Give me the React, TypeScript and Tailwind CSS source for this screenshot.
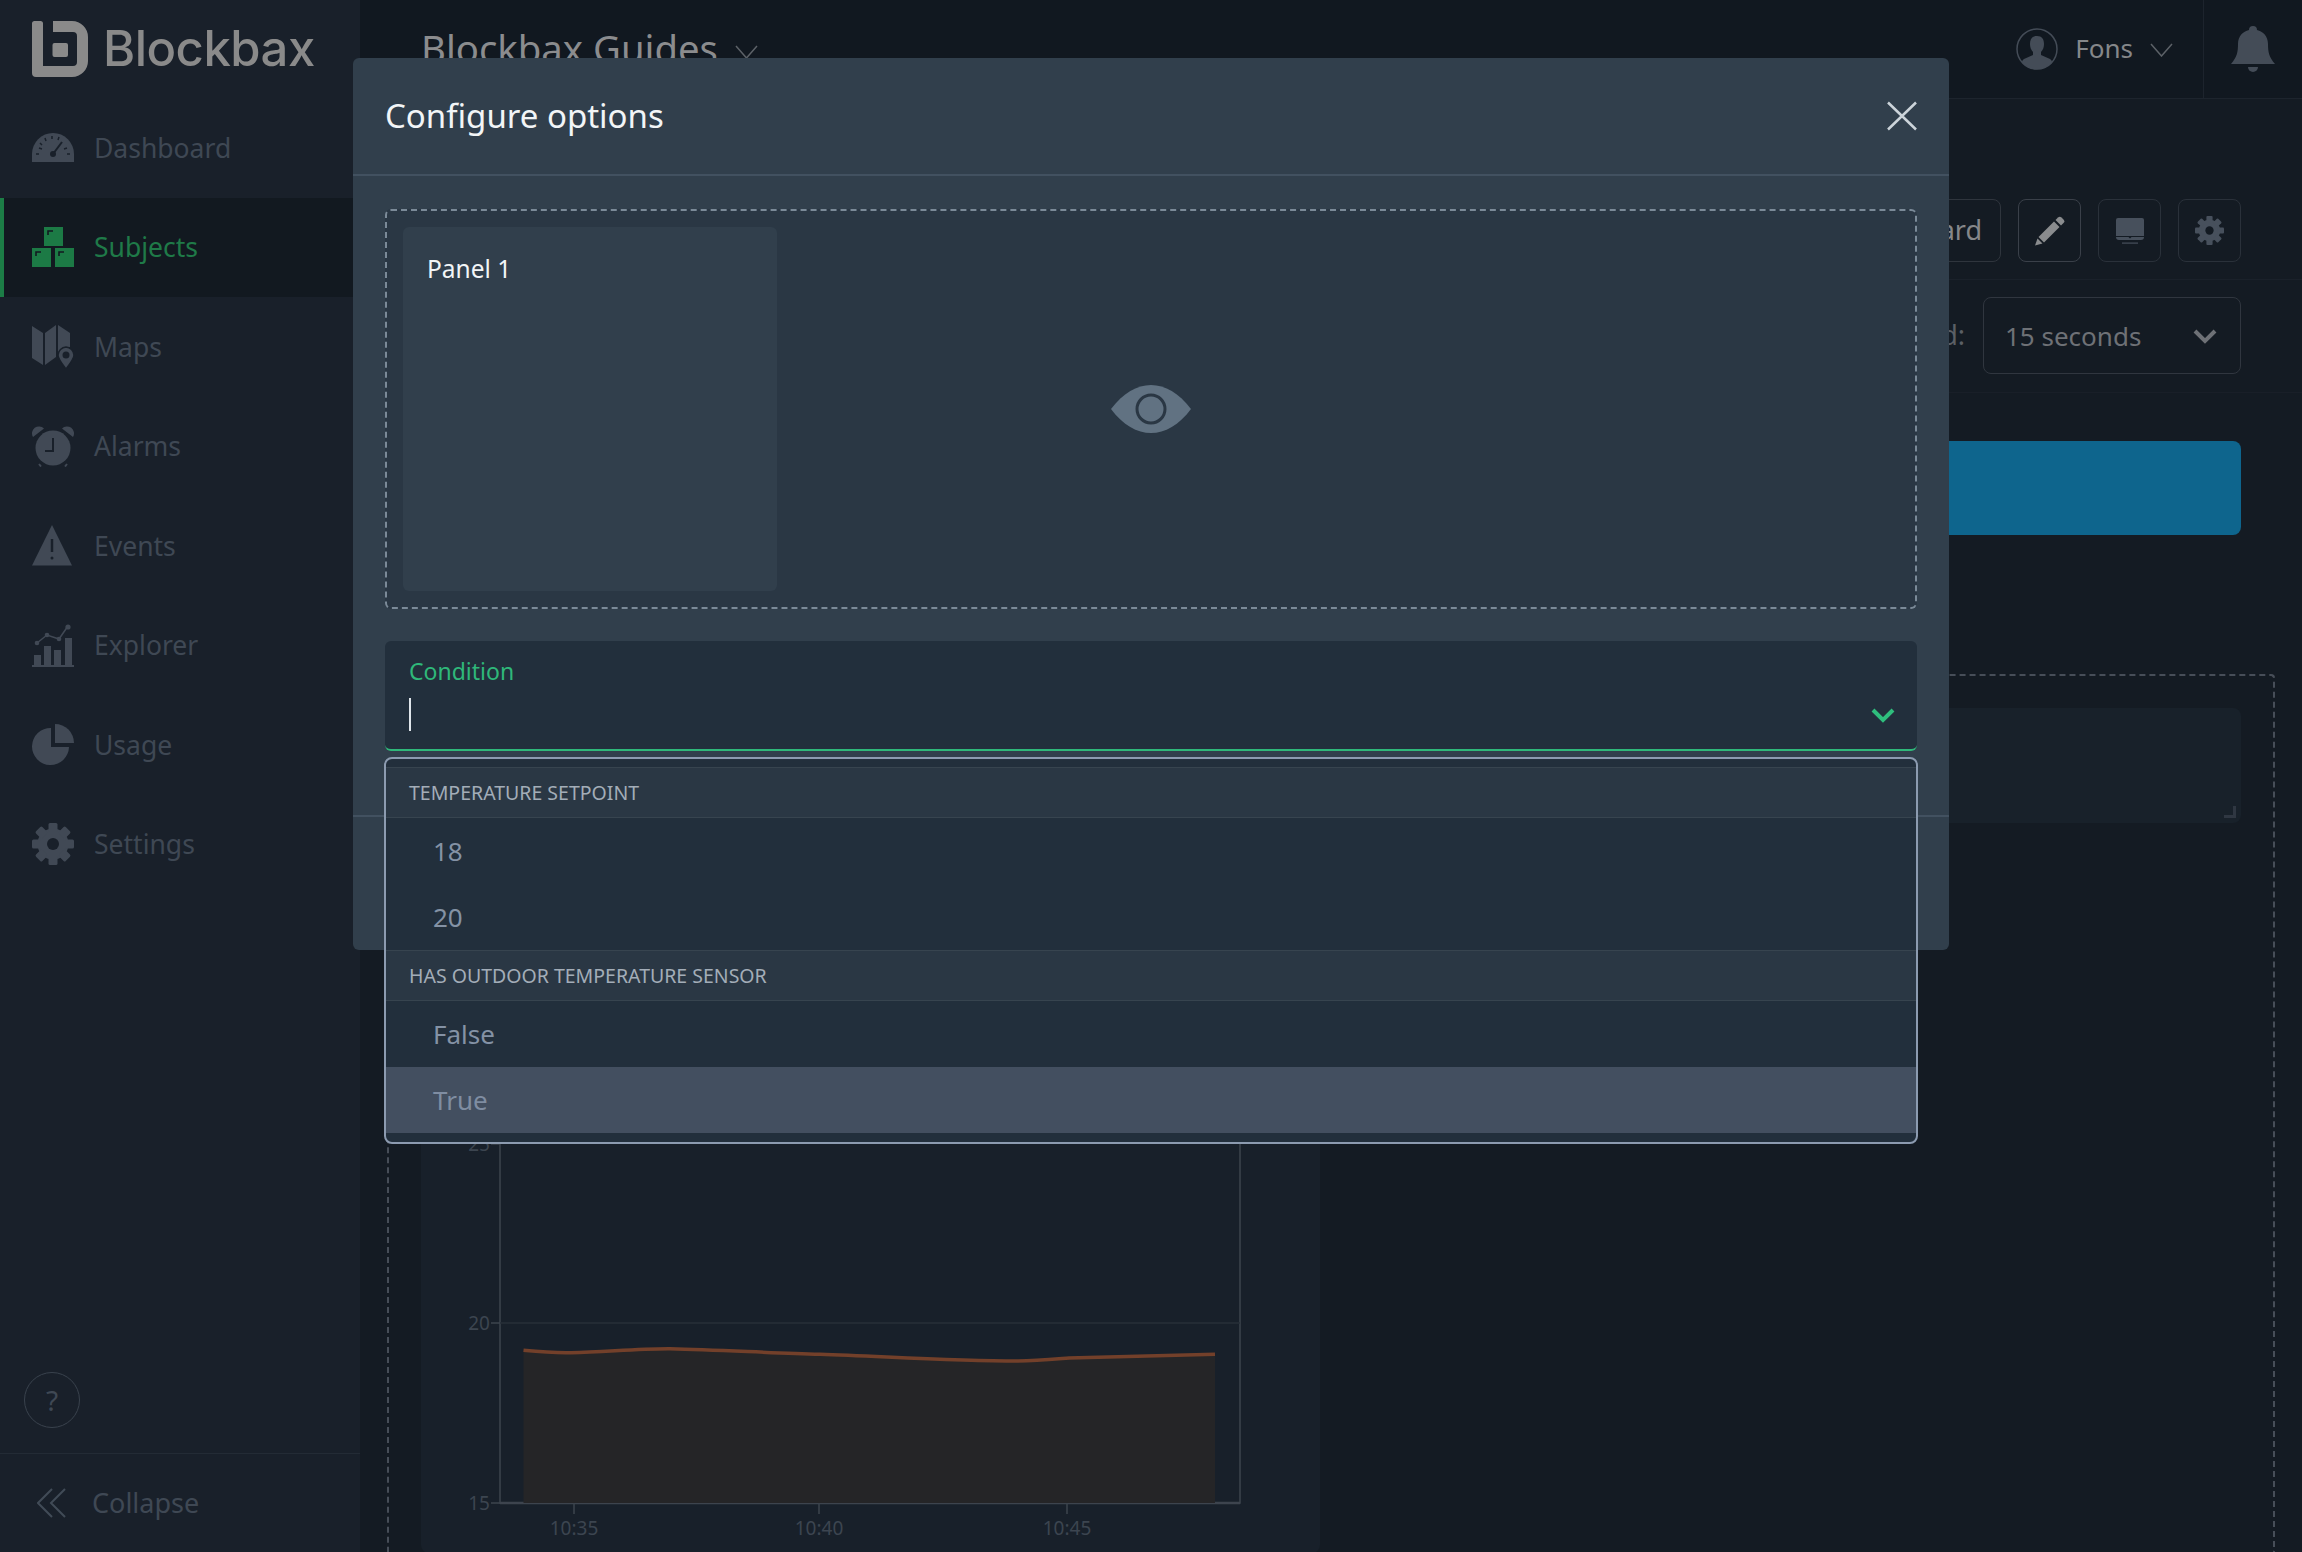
import React from "react";

const font = { fontFamily: '"Noto Sans", "Open Sans", sans-serif' };

function LogoIcon() {
  return (
    <svg width="56" height="56" viewBox="0 0 56 56" className="fill-[#8a8a8a]">
      <path d="M0 2.5a2.5 2.5 0 0 1 2.5-2.5h6a2.5 2.5 0 0 1 2.5 2.5V45h30a4 4 0 0 0 4-4V15a4 4 0 0 0-4-4H21V0h19a16 16 0 0 1 16 16v24a16 16 0 0 1-16 16H4a4 4 0 0 1-4-4Z" />
      <rect x="20.500" y="22" width="15.500" height="14" rx="2" />
    </svg>
  );
}

function DashboardIcon() {
  return (
    <svg width="42" height="30" viewBox="0 0 42 30" className="fill-[#414955] stroke-[#19202a]">
      <path stroke="none" d="M0 29V21a21 21 0 0 1 42 0v8Z" />
      <path strokeWidth="1.5" d="M4 21h3M35 21h3M8 10l2 2M13 5l1 3M20 3v3M27 4l-1 3M7 15l3 1M35 15l-3 1" />
      <path strokeWidth="2" d="M21 21 30 9" />
      <circle cx="21" cy="21" r="3" className="fill-[#19202a]" stroke="none" />
    </svg>
  );
}

function SubjectsIcon() {
  return (
    <svg width="42" height="40" viewBox="0 0 42 40" className="fill-[#1c7a45]">
      <rect x="12" y="0" width="19" height="19" />
      <rect x="0" y="21" width="19" height="19" />
      <rect x="23" y="21" width="19" height="19" />
      <path d="M16 8V4h5" fill="none" stroke="#121920" strokeWidth="1.6" />
      <path d="M4 29v-4h5" fill="none" stroke="#121920" strokeWidth="1.6" />
      <path d="M27 29v-4h5" fill="none" stroke="#121920" strokeWidth="1.6" />
    </svg>
  );
}

function MapsIcon() {
  return (
    <svg width="42" height="44" viewBox="0 0 42 44" className="fill-[#414955]">
      <path d="M0 1l11 7v32L0 33Z" />
      <path d="M13 8l11-8v32l-11 8Z" />
      <path d="M26 0l12 8v14a11 11 0 0 0-12 8Z" />
      <path d="M34 22a8.5 8.5 0 0 1 8 8c0 4-5 10-8 14-3-4-8-10-8-14a8.5 8.5 0 0 1 8-8Z" stroke="#19202a" strokeWidth="1.5" />
      <circle cx="34" cy="30" r="3.5" className="fill-[#19202a]" />
    </svg>
  );
}

function AlarmIcon() {
  return (
    <svg width="42" height="41" viewBox="0 0 42 41" className="fill-[#414955]">
      <circle cx="21" cy="22" r="17.5" />
      <path d="M1 11a7 7 0 0 1 11-8.5Z" />
      <path d="M41 11a7 7 0 0 0-11-8.5Z" />
      <path d="M7 38l2 2.5M35 38l-2 2.5" stroke="#414955" strokeWidth="2" />
      <path d="M21 12v13h-8" fill="none" stroke="#19202a" strokeWidth="2" />
    </svg>
  );
}

function EventsIcon() {
  return (
    <svg width="40" height="41" viewBox="0 0 40 41" className="fill-[#414955]">
      <path d="M20 0l20 40.500H0Z" />
      <path d="M20 14v13" stroke="#19202a" strokeWidth="2.500" />
      <circle cx="20" cy="33" r="1.500" className="fill-[#19202a]" />
    </svg>
  );
}

function ExplorerIcon() {
  return (
    <svg width="42" height="43" viewBox="0 0 42 43" className="fill-[#414955]">
      <rect x="2" y="31" width="7" height="10" />
      <rect x="12" y="22" width="7" height="19" />
      <rect x="22" y="26" width="7" height="15" />
      <rect x="33" y="14" width="7" height="27" />
      <rect x="0" y="41" width="42" height="2" />
      <path d="M5 19 15 11 27 15 36 2" fill="none" stroke="#414955" strokeWidth="1.500" />
      <circle cx="5" cy="19" r="2.300" />
      <circle cx="15" cy="11" r="2.300" />
      <circle cx="27" cy="15" r="2.300" />
      <circle cx="36" cy="3" r="2.600" />
    </svg>
  );
}

function UsageIcon() {
  return (
    <svg width="42" height="42" viewBox="0 0 42 42" className="fill-[#414955]">
      <path d="M19 4v19h18a18.500 18.500 0 1 1-18-19Z" />
      <path d="M23 0a19 19 0 0 1 19 19H23Z" />
    </svg>
  );
}

function GearIcon({ size, color, hole }: { size: number; color: string; hole: string }) {
  const teeth = [0, 45, 90, 135, 180, 225, 270, 315];
  return (
    <svg width={size} height={size} viewBox="0 0 42 42">
      <circle cx="21" cy="21" r="15.500" fill={color} />
      {teeth.map((a) => (
        <rect key={a} x="16.500" y="0" width="9" height="9" rx="1.500" fill={color} transform={`rotate(${a} 21 21)`} />
      ))}
      <circle cx="21" cy="21" r="6" fill={hole} />
    </svg>
  );
}

const navItems = [
  { label: "Dashboard", icon: <DashboardIcon /> },
  { label: "Subjects", icon: <SubjectsIcon />, active: true },
  { label: "Maps", icon: <MapsIcon /> },
  { label: "Alarms", icon: <AlarmIcon /> },
  { label: "Events", icon: <EventsIcon /> },
  { label: "Explorer", icon: <ExplorerIcon /> },
  { label: "Usage", icon: <UsageIcon /> },
  { label: "Settings", icon: <GearIcon size={42} color="#414955" hole="#19202a" /> },
];

function Sidebar() {
  return (
    <aside className="flex h-full w-[360px] shrink-0 flex-col bg-[#19202a]">
      <div className="flex h-[98px] items-center gap-[15px] pb-[1px] pl-[32px]">
        <LogoIcon />
        <span className="text-[49px] font-medium leading-none tracking-[-0.5px] text-[#8a8a8a] [font-family:Inter,sans-serif]">
          Blockbax
        </span>
      </div>
      <nav className="flex flex-col">
        {navItems.map((item) => (
          <div
            key={item.label}
            className={`flex h-[99.5px] items-center ${
              item.active ? "border-l-[4px] border-[#1c7d46] bg-[#121920] pl-[28px] text-[#1f7a48]" : "pl-[32px] text-[#3f4854]"
            }`}
          >
            <span className="flex w-[62px] items-center">{item.icon}</span>
            <span className="text-[26.500px] leading-none">{item.label}</span>
          </div>
        ))}
      </nav>
      <div className="mt-auto">
        <div className="pb-[25px] pl-[24px]">
          <span className="flex h-[56px] w-[56px] items-center justify-center rounded-full border-[1.5px] border-[#39424d] text-[28px] text-[#3f4854]">
            ?
          </span>
        </div>
        <div className="flex h-[99px] items-center border-t border-[#232b35] pb-[1px] pl-[37px]">
          <svg width="30" height="30" viewBox="0 0 30 30" fill="none" stroke="#414b57" strokeWidth="2" className="mr-[25px]">
            <path d="M15 1 1 15l14 14M28 1 14 15l14 14" />
          </svg>
          <span className="text-[27px] leading-none text-[#3f4854]">Collapse</span>
        </div>
      </div>
    </aside>
  );
}

function ThinChevron({ className }: { className: string }) {
  return (
    <svg width="23" height="14" viewBox="0 0 23 14" fill="none" stroke="#5d6268" strokeWidth="1.500" className={className}>
      <path d="M1 1l10.500 12L22 1" />
    </svg>
  );
}

function Header() {
  return (
    <header className="flex h-[99px] shrink-0 items-center border-b border-[#1d242d] bg-[#111820] pl-[61px]">
      <span className="mb-[2px] text-[38.300px] leading-none text-[#8b8c8e]">Blockbax Guides</span>
      <ThinChevron className="ml-[17px] mt-[6px]" />
      <div className="ml-auto flex h-full items-center">
        <svg width="42" height="42" viewBox="0 0 42 42" className="mr-[17px]">
          <circle cx="21" cy="21" r="20" fill="none" stroke="#444c57" strokeWidth="1.500" />
          <path d="M21 8c5 0 7 3 7 8 0 3-1 6-3 8v3l9 4c2 1 2 3 2 3a19 19 0 0 1-30 0s0-2 2-3l9-4v-3c-2-2-3-5-3-8 0-5 2-8 7-8Z" fill="#444c57" />
        </svg>
        <span className="mb-[2px] text-[26px] leading-none text-[#85878a]">Fons</span>
        <ThinChevron className="ml-[17px] mr-[30px] mt-[2px]" />
        <div className="flex h-full w-[99px] items-center justify-center border-l border-[#1d242d]">
          <svg width="44" height="46" viewBox="0 0 44 46" fill="#444c57">
            <path d="M22 0a4 4 0 0 1 4 4c6 1.500 11 6 11 14 0 8 1 13 7 20H0c6-7 7-12 7-20 0-8 5-12.500 11-14a4 4 0 0 1 4-4Z" />
            <path d="M17 41h10a5 5 0 0 1-10 0Z" />
          </svg>
        </div>
      </div>
    </header>
  );
}

function ToolButton({ children, bright }: { children: React.ReactNode; bright?: boolean }) {
  return (
    <div className={`flex h-[63px] w-[63px] items-center justify-center rounded-[8px] border-[1.5px] ${bright ? "border-[#3a4049]" : "border-[#2a313a]"}`}>
      {children}
    </div>
  );
}

function Toolbar() {
  return (
    <>
      <div className="flex shrink-0 items-center justify-end gap-[17px] border-b border-[#1a212a] pb-[17px] pr-[61px] pt-[100px]">
        <div className="flex h-[63px] items-center rounded-[8px] border-[1.5px] border-[#2f353d] px-[18px] text-[27px] text-[#85878a]">
          Edit dashboard
        </div>
        <ToolButton bright>
          <svg width="30" height="30" viewBox="0 0 30 30" fill="#8a8c8e">
            <path d="M23 1.500a2.500 2.500 0 0 1 3.500 0l2 2a2.500 2.500 0 0 1 0 3.500L26 9.500 20.500 4Z" />
            <path d="M19 5.500 24.500 11 9 26.500 3.500 21Z" />
            <path d="M2.500 22.500 7.500 27.500 0 29.500Z" />
          </svg>
        </ToolButton>
        <ToolButton>
          <svg width="28" height="26" viewBox="0 0 28 26" fill="#47505c">
            <path d="M2 0h24a2 2 0 0 1 2 2v16H0V2a2 2 0 0 1 2-2Z" />
            <path d="M0 19h12.500l1.500 1.500 1.500-1.500H28a3 3 0 0 1-3 3H3a3 3 0 0 1-3-3Z" />
            <path d="M6 24.500h16v1.200H6Z" />
          </svg>
        </ToolButton>
        <ToolButton>
          <GearIcon size={29} color="#47505c" hole="#131a22" />
        </ToolButton>
      </div>
      <div className="flex shrink-0 items-center justify-end gap-[18px] border-b border-[#191f28] pb-[18px] pr-[61px] pt-[17px]">
        <span className="text-[27px] text-[#5b5f65]">Refresh period:</span>
        <div className="flex h-[77px] w-[258px] items-center justify-between rounded-[8px] border-[1.5px] border-[#30363f] pl-[21px] pr-[23px]">
          <span className="text-[26px] leading-none text-[#6e7176]">15 seconds</span>
          <svg width="24" height="16" viewBox="0 0 24 16" fill="none" stroke="#6e7176" strokeWidth="4">
            <path d="M2 3l10 10L22 3" />
          </svg>
        </div>
      </div>
    </>
  );
}

function Chart() {
  const ticks = [
    { x: 153, label: "10:35" },
    { x: 398, label: "10:40" },
    { x: 646, label: "10:45" },
  ];
  const line = "M102.500 509.300C120 511 135 512 150 511.700C185 511 215 507.500 249 507.700C300 509 350 512 399 513.300C465 515.500 530 520 597 520C615 520 630 518.500 648 517L794 513.300";
  return (
    <svg width="899" height="712" viewBox="0 0 899 712">
      <path d="M79 303V662H819V303" fill="none" stroke="#3d444e" strokeWidth="1.500" />
      <path d="M79 662H819" fill="none" stroke="#3d444e" strokeWidth="2.500" />
      <path d="M79 482H819" stroke="#272f39" strokeWidth="1.500" />
      <path d="M70 303h9M70 482h9M70 662h9M153 662v11M398 662v11M646 662v11" stroke="#3d444e" strokeWidth="1.500" />
      <path d={`${line}V662H102.500Z`} fill="#252527" stroke="none" />
      <path d={line} fill="none" stroke="#73402a" strokeWidth="3.500" />
      <g fill="#3c4550" fontSize="19" textAnchor="end" style={font}>
        <text x="69" y="310">25</text>
        <text x="69" y="489">20</text>
        <text x="69" y="669">15</text>
      </g>
      <g fill="#3c4550" fontSize="19" textAnchor="middle" style={font}>
        {ticks.map((t) => (
          <text key={t.x} x={t.x} y="694">{t.label}</text>
        ))}
      </g>
    </svg>
  );
}

function Main() {
  return (
    <main className="flex h-full min-w-0 flex-1 flex-col overflow-hidden bg-[#141b23]">
      <Header />
      <Toolbar />
      <div className="mt-[48px] flex h-[94px] shrink-0 justify-end pr-[61px]">
        <div className="w-[1400px] rounded-[8px] bg-[#0e658d]" />
      </div>
      <div className="mx-[27px] mt-[139px] shrink-0 rounded-t-[4px] border-x-[2px] border-t-[2px] border-dashed border-[#474e58] px-[32px] pt-[32px]">
        <div className="relative h-[115px] rounded-[8px] bg-[#18212a]">
          <svg width="12" height="12" viewBox="0 0 12 12" fill="none" stroke="#2f3742" strokeWidth="3" className="absolute bottom-[5px] right-[5px]">
            <path d="M0 10.500h10.500V0" />
          </svg>
        </div>
        <div className="mt-[18px] h-[712px] w-[899px] rounded-[8px] bg-[#18202a]">
          <Chart />
        </div>
      </div>
    </main>
  );
}

function Option({ label, hover }: { label: string; hover?: boolean }) {
  return (
    <div className={`flex h-[66px] items-center pl-[47px] text-[26px] leading-none ${hover ? "bg-[#434f60] text-[#7f8da2]" : "text-[#8492a5]"}`}>
      {label}
    </div>
  );
}

function GroupHeader({ label }: { label: string }) {
  return (
    <div className="flex h-[51px] items-center border-y-[1.5px] border-[#37444f] bg-[#2a3744] pl-[23px] text-[19.500px] leading-none text-[#a3adb8]">
      {label}
    </div>
  );
}

function Modal() {
  return (
    <div className="absolute left-[353px] top-[58px] h-[892px] w-[1596px] rounded-[6px] bg-[#313f4c]">
      <div className="absolute left-0 right-0 top-[757px] h-[2px] bg-[#425160]" />
      <div className="flex h-[118px] items-center justify-between border-b-[2px] border-[#425160] pl-[32px] pr-[32px]">
        <span className="mb-[2px] text-[33px] leading-none text-[#f2f5f7]">Configure options</span>
        <svg width="30" height="30" viewBox="0 0 30 30" fill="none" stroke="#ccd4da" strokeWidth="2.500">
          <path d="M1 1.500l28 27M29 1.500l-28 27" />
        </svg>
      </div>
      <div className="relative px-[32px] pt-[33px]">
        <div className="flex h-[400px] rounded-[6px] border-[2px] border-dashed border-[#7b8a98] bg-[#2a3744] p-[16px]">
          <div className="h-full w-[374px] rounded-[6px] bg-[#313f4c] pl-[24px] pt-[30px] text-[24.500px] leading-none text-[#f2f5f7]">
            Panel 1
          </div>
          <div className="flex flex-1 items-center justify-center pr-[374px]">
            <svg width="80" height="48" viewBox="0 0 80 48" fill="#617282">
              <path d="M0 24C12 8 26 0 40 0s28 8 40 24C68 40 54 48 40 48S12 40 0 24Z" />
              <circle cx="40" cy="24" r="14" fill="none" stroke="#2a3744" strokeWidth="3" />
            </svg>
          </div>
        </div>
        <div className="relative mt-[32px]">
          <div className="relative h-[110px] rounded-[6px] border-b-[2px] border-[#2fb87a] bg-[#222f3c] pl-[24px] pt-[15px]">
            <div className="text-[23px] leading-[30px] text-[#2fb87a]">Condition</div>
            <div className="mt-[12px] h-[33px] w-[2px] bg-[#dfe5ea]" />
            <svg width="24" height="16" viewBox="0 0 24 16" fill="none" stroke="#2fbe7d" strokeWidth="4" className="absolute right-[22px] top-[66px]">
              <path d="M2 3l10 10L22 3" />
            </svg>
          </div>
          <div className="absolute left-[-1px] right-[-1px] top-[116px] overflow-hidden rounded-[8px] border-[2px] border-[#8c9bb0] bg-[#222f3c] pb-[9px] pt-[8px]">
            <GroupHeader label="TEMPERATURE SETPOINT" />
            <Option label="18" />
            <Option label="20" />
            <GroupHeader label="HAS OUTDOOR TEMPERATURE SENSOR" />
            <Option label="False" />
            <Option label="True" hover />
          </div>
        </div>
      </div>
    </div>
  );
}

export default function App() {
  return (
    <div className="relative flex h-screen w-full overflow-hidden" style={font}>
      <Sidebar />
      <Main />
      <Modal />
    </div>
  );
}
